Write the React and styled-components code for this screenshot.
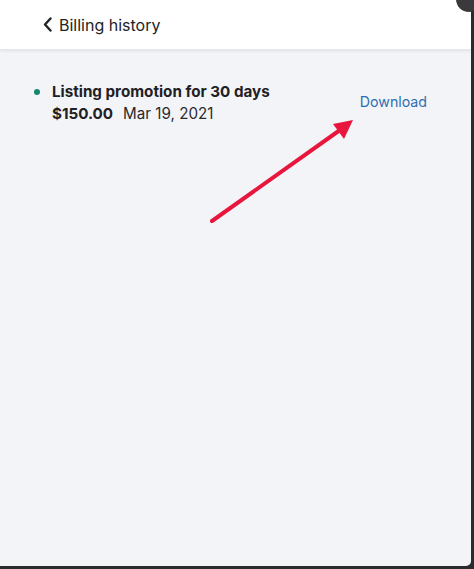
import React from 'react';
import styled, { createGlobalStyle } from 'styled-components';

const GlobalStyle = createGlobalStyle`
  html, body {
    margin: 0;
    padding: 0;
    background: #2b2b2d;
  }
  body {
    font-family: Inter, "Noto Sans", sans-serif;
  }
`;

const Screen = styled.div`
  position: relative;
  width: 474px;
  height: 569px;
  overflow: hidden;
  background: #2b2b2d;
`;

const Panel = styled.div`
  position: relative;
  width: 471px;
  height: 566px;
  background: #f3f4f8;
  border-bottom-right-radius: 5px;
  display: flex;
  flex-direction: column;
  overflow: hidden;
`;

const Header = styled.div`
  height: 50px;
  flex-shrink: 0;
  background: #ffffff;
  display: flex;
  align-items: center;
  gap: 7px;
  padding-left: 43px;
  box-shadow: 0 1px 3px rgba(0, 0, 0, 0.08);
  border-bottom: 1px solid #e6e7ec;
  box-sizing: border-box;
`;

const Title = styled.span`
  font-size: 16px;
  color: #222326;
`;

const Body = styled.div`
  padding: 32px 44px 0 34px;
`;

const Item = styled.div`
  display: flex;
  align-items: flex-start;
`;

const Dot = styled.span`
  width: 6px;
  height: 6px;
  border-radius: 50%;
  background: #14876e;
  margin-top: 7px;
  margin-right: 12px;
  flex-shrink: 0;
`;

const Info = styled.div`
  flex: 1;
  display: flex;
  flex-direction: column;
  gap: 2px;
  color: #1f2023;
`;

const ItemName = styled.div`
  font-size: 15.2px;
  font-weight: 700;
  line-height: 20px;
`;

const Meta = styled.div`
  display: flex;
  gap: 10px;
  font-size: 15.2px;
  line-height: 20px;
`;

const Amount = styled.span`
  font-weight: 700;
`;

const DateText = styled.span`
  font-weight: 400;
  color: #2a2b2e;
`;

const DownloadLink = styled.a`
  font-size: 14.2px;
  color: #2f6db3;
  text-decoration: none;
  margin-top: 11px;
`;

const CloseKnob = styled.div`
  position: absolute;
  top: -14px;
  right: -8px;
  width: 26px;
  height: 26px;
  border-radius: 50%;
  background: #3a3a3d;
`;

const Annotation = styled.svg`
  position: absolute;
  left: 0;
  top: 0;
  pointer-events: none;
`;

const Chevron = () => (
  <svg width="9" height="15" viewBox="0 0 9 15">
    <path d="M7.5 1.5 L2 7.5 L7.5 13.5" fill="none" stroke="#222326" strokeWidth="2.4" strokeLinecap="round" strokeLinejoin="round" />
  </svg>
);

export default function App() {
  return (
    <Screen>
      <GlobalStyle />
      <Panel>
        <Header>
          <Chevron />
          <Title>Billing history</Title>
        </Header>
        <Body>
          <Item>
            <Dot />
            <Info>
              <ItemName>Listing promotion for 30 days</ItemName>
              <Meta>
                <Amount>$150.00</Amount>
                <DateText>Mar 19, 2021</DateText>
              </Meta>
            </Info>
            <DownloadLink href="#">Download</DownloadLink>
          </Item>
        </Body>
      </Panel>
      <CloseKnob />
      <Annotation width="474" height="569" viewBox="0 0 474 569">
        <line x1="212" y1="221" x2="340" y2="130" stroke="#e8163d" strokeWidth="4" strokeLinecap="round" />
        <polygon points="353,120 333,124 344,139" fill="#e8163d" />
      </Annotation>
    </Screen>
  );
}
